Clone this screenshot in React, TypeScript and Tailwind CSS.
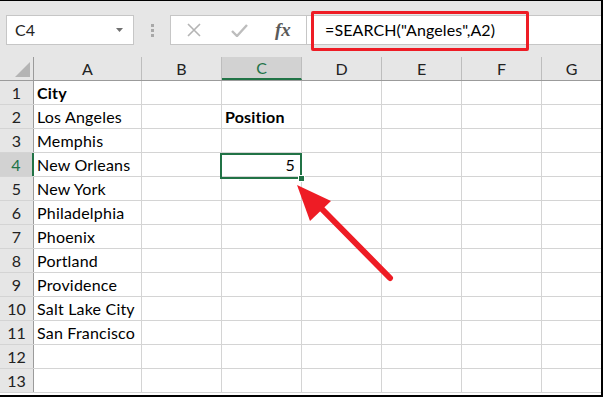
import React from "react";

const cols = ["A", "B", "C", "D", "E", "F", "G"];
const widths = ["w-[108px]", "w-[80px]", "w-[80px]", "w-[80px]", "w-[80px]", "w-[80px]", "w-[60px]"];
const cities = ["City", "Los Angeles", "Memphis", "New Orleans", "New York", "Philadelphia", "Phoenix", "Portland", "Providence", "Salt Lake City", "San Francisco", "", ""];

function Cell({ row, col }: { row: number; col: number }) {
  let content: React.ReactNode = null;
  let cls = "";
  if (col === 0 && cities[row - 1]) {
    content = cities[row - 1];
    if (row === 1) cls = "font-bold";
  }
  if (col === 2 && row === 2) {
    content = "Position";
    cls = "font-bold";
  }
  if (col === 2 && row === 4) {
    content = "5";
    cls = "justify-end pr-[6px]";
  }
  return (
    <div className={`${widths[col]} shrink-0 h-full border-r border-[#d4d4d4] flex items-center pl-[3px] text-[16px] tracking-[0.2px] text-black whitespace-nowrap ${cls}`}>
      {content}
    </div>
  );
}

export default function App() {
  return (
    <div className="w-[603px] h-[397px] overflow-hidden bg-white border-t border-r-2 border-b-2 border-black relative" style={{ fontFamily: "Lato, 'Open Sans', sans-serif" }}>
      {/* toolbar */}
      <div className="h-[56px] bg-[#e6e6e6] flex items-start pt-[14px] pl-[6px]">
        <div className="w-[128px] h-[30px] bg-white border border-[#c6c6c6] flex items-center justify-between pl-[8px] pr-[10px]">
          <span className="text-[16px] text-[#222]">C4</span>
          <svg width="7" height="4" viewBox="0 0 7 4"><path d="M0 0h7L3.5 4z" fill="#707070" /></svg>
        </div>
        <div className="w-[36px] h-[30px] flex flex-col items-center justify-center gap-[2px]">
          <div className="w-[3px] h-[3px] bg-[#a8a8a8]" />
          <div className="w-[3px] h-[3px] bg-[#a8a8a8]" />
          <div className="w-[3px] h-[3px] bg-[#a8a8a8]" />
        </div>
        <div className="w-[137px] h-[30px] bg-white border border-[#c6c6c6] flex items-center">
          <svg className="ml-[16px]" width="14" height="14" viewBox="0 0 14 14"><path d="M1 1l12 12M13 1L1 13" stroke="#b4b4b4" strokeWidth="1.6" /></svg>
          <svg className="ml-[30px]" width="17" height="13" viewBox="0 0 17 13"><path d="M1 7l5 5L16 1" stroke="#bdbdbd" strokeWidth="2.4" fill="none" /></svg>
          <span className="ml-[27px] text-[19px] italic font-bold text-[#5a5a5a]" style={{ fontFamily: "'Liberation Serif', serif" }}>fx</span>
        </div>
        <div className="flex-1 h-[30px] bg-white border-y border-[#c6c6c6] flex items-center pl-[18px]">
          <span className="text-[16px] text-black tracking-[0.1px]">=SEARCH("Angeles",A2)</span>
        </div>
      </div>

      {/* column headers */}
      <div className="h-[24px] flex bg-[#e6e6e6] border-b border-[#9b9b9b]">
        <div className="w-[34px] shrink-0 h-full border-r border-[#9b9b9b] relative">
          <svg className="absolute right-[3px] bottom-[3px]" width="15" height="15" viewBox="0 0 15 15"><path d="M15 0v15H0z" fill="#b4b4b4" /></svg>
        </div>
        {cols.map((c, i) => (
          <div
            key={c}
            className={`${widths[i]} shrink-0 h-full flex items-center justify-center text-[16px] border-r ${i === 2 ? "bg-[#d2d2d2] text-[#217346] border-[#bdbdbd] border-b-2 border-b-[#217346]" : "text-[#222] border-[#bdbdbd]"}`}
          >
            {c}
          </div>
        ))}
      </div>

      {/* rows */}
      {Array.from({ length: 13 }, (_, r) => r + 1).map((row) => (
        <div key={row} className="h-[24px] flex border-b border-[#d4d4d4]">
          <div className={`w-[34px] shrink-0 h-full flex items-center justify-center text-[16px] border-r border-[#9b9b9b] ${row === 4 ? "bg-[#d2d2d2] text-[#217346] border-r-2 border-r-[#217346]" : "bg-[#e6e6e6] text-[#222]"}`}>
            {row}
          </div>
          {cols.map((_, i) => (
            <Cell key={i} row={row} col={i} />
          ))}
        </div>
      ))}

      {/* selected cell */}
      <div className="absolute left-[220px] top-[152px] w-[82px] h-[26px] border-2 border-[#217346]" />
      <div className="absolute left-[298px] top-[174px] w-[7px] h-[7px] bg-[#217346] border border-white" />

      {/* red highlight around formula */}
      <div className="absolute left-[311px] top-[10px] w-[218px] h-[40px] border-[3px] border-[#ee1c25] rounded-[2px]" />

      {/* arrow */}
      <svg className="absolute left-0 top-0" width="603" height="397" viewBox="0 0 603 397">
        <path d="M390 277L318 204" stroke="#ee1c25" strokeWidth="6" strokeLinecap="round" />
        <path d="M297 184L331 200L310 220z" fill="#ee1c25" />
      </svg>
    </div>
  );
}
